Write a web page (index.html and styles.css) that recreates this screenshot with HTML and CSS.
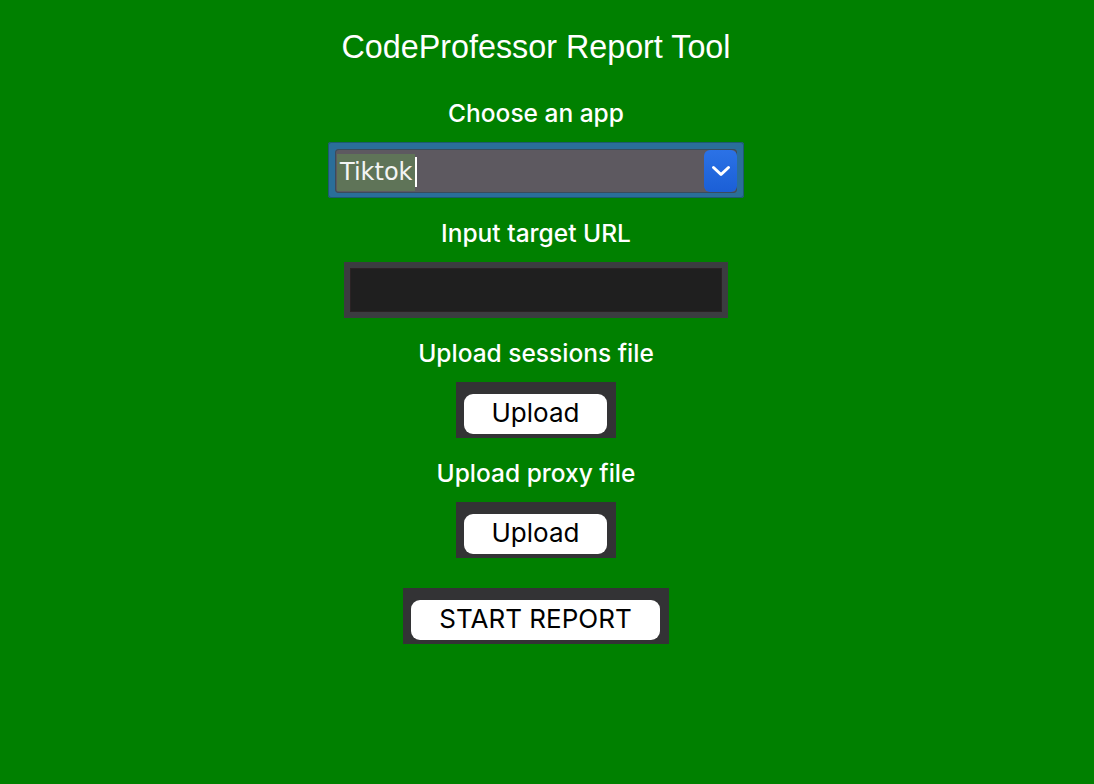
FILE: index.html
```html
<!DOCTYPE html>
<html>
<head>
<meta charset="utf-8">
<title>CodeProfessor Report Tool</title>
<link rel="stylesheet" href="styles.css">
</head>
<body>
<main class="app">
  <h1 class="title">CodeProfessor Report Tool</h1>

  <section class="field">
    <label class="label">Choose an app</label>
    <div class="select-ring">
      <div class="select">
        <span class="select-value"><span class="sel-text">Tiktok</span><span class="caret"></span></span>
        <span class="select-btn">
          <svg width="20" height="12" viewBox="0 0 20 12"><path d="M2.5 2.5 L10 9.5 L17.5 2.5" fill="none" stroke="#fff" stroke-width="3" stroke-linecap="round" stroke-linejoin="round"/></svg>
        </span>
      </div>
    </div>
  </section>

  <section class="field">
    <label class="label">Input target URL</label>
    <div class="input-frame"><div class="input"></div></div>
  </section>

  <section class="field">
    <label class="label">Upload sessions file</label>
    <div class="btn-frame"><button class="btn btn-upload">Upload</button></div>
  </section>

  <section class="field">
    <label class="label">Upload proxy file</label>
    <div class="btn-frame"><button class="btn btn-upload">Upload</button></div>
  </section>

  <div class="btn-frame start-frame"><button class="btn btn-start">START REPORT</button></div>
</main>
</body>
</html>
```
FILE: styles.css
```css
html, body {
  margin: 0;
  padding: 0;
  background: #008000;
  height: 100%;
}
body {
  font-family: Inter, "Liberation Sans", sans-serif;
  color: #fff;
}
.app {
  display: flex;
  flex-direction: column;
  align-items: center;
  padding-top: 27px;
  padding-right: 22px;
}
.title {
  margin: 0;
  font-family: "Liberation Sans", Arial, sans-serif;
  font-weight: 400;
  font-size: 32.3px;
  line-height: 40px;
  height: 40px;
}
.field {
  display: flex;
  flex-direction: column;
  align-items: center;
  margin-top: 31px;
}
.field + .field {
  margin-top: 20px;
}
.label {
  font-size: 24.5px;
  font-weight: 500;
  line-height: 30px;
  height: 30px;
  margin-bottom: 14px;
}
.select-ring {
  width: 416px;
  height: 56px;
  box-sizing: border-box;
  padding: 7px;
  background: #2a6e9a;
  border-radius: 3px;
  box-shadow: inset 0 0 0 1px #1d5a70;
}
.select {
  height: 44px;
  box-sizing: border-box;
  background: #5d5960;
  border-radius: 4px;
  display: flex;
  align-items: center;
  justify-content: space-between;
  padding: 1px 0 1px 2px;
  box-shadow: inset 0 0 0 1px #3a4c5c;
}
.select-value {
  display: flex;
  align-items: center;
  height: 37px;
  margin-top: 2px;
}
.sel-text {
  font-family: "DejaVu Sans", sans-serif;
  font-size: 24px;
  line-height: 37px;
  background: #5f7458;
  padding: 0 3px;
  color: #f4f4f4;
}
.caret {
  display: inline-block;
  width: 2px;
  height: 30px;
  background: #fff;
}
.select-btn {
  width: 33px;
  height: 42px;
  border-radius: 6px;
  background: linear-gradient(#2b72e6, #1b5fd6);
  display: flex;
  align-items: center;
  justify-content: center;
}
.input-frame {
  width: 384px;
  height: 56px;
  box-sizing: border-box;
  padding: 6px;
  background: #3b3c40;
}
.input {
  height: 100%;
  background: #1f1f1f;
  box-shadow: inset 0 0 0 1px #2a2224;
}
.btn-frame {
  background: #333335;
  padding: 12px 9px 4px 8px;
  display: flex;
}
.btn {
  border: 0;
  background: #fff;
  color: #000;
  border-radius: 9px;
  font-family: Inter, "Liberation Sans", sans-serif;
  font-size: 26px;
  height: 40px;
  padding: 0 0 3px;
  cursor: pointer;
}
.btn-upload {
  width: 143px;
}
.start-frame {
  margin-top: 30px;
}
.btn-start {
  width: 249px;
}
```
